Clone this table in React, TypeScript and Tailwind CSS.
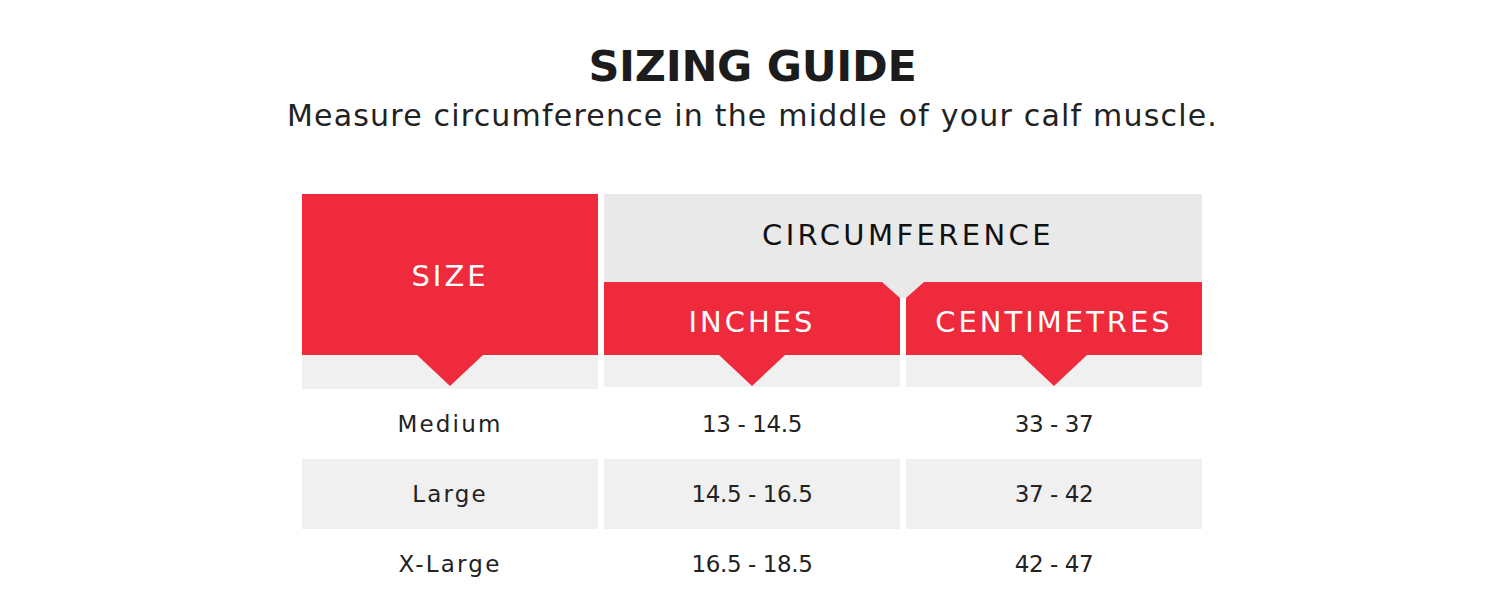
const RED = 'bg-[#ee2a3c]';

function Arrow() {
  return (
    <svg width="66" height="31" viewBox="0 0 66 31" className="block">
      <polygon points="0,0 66,0 33,31" fill="#ee2a3c" />
    </svg>
  );
}

const rows = [
  { size: 'Medium', inches: '13 - 14.5', cm: '33 - 37', shaded: false },
  { size: 'Large', inches: '14.5 - 16.5', cm: '37 - 42', shaded: true },
  { size: 'X-Large', inches: '16.5 - 18.5', cm: '42 - 47', shaded: false },
];

export default function App() {
  return (
    <div className="h-[602px] w-[1500px] bg-white font-['DejaVu_Sans',sans-serif] text-[#1a1a1a]">
      <div className="flex flex-col items-center pt-[42px] pl-[5px]">
        <h1 className="text-[43px] leading-[48px] font-bold tracking-[-0.3px] text-[#1c1c1c]">SIZING GUIDE</h1>
        <p className="mt-[11px] text-[30px] leading-[30px] tracking-[1.2px] text-[#222]">
          Measure circumference in the middle of your calf muscle.
        </p>
      </div>

      <div className="mt-[63px] ml-[302px] w-[900px]">
        {/* header */}
        <div className="flex gap-[6px]">
          <div className="flex w-[296px] flex-col">
            <div className={`flex h-[161px] items-center justify-center pt-[4px] ${RED} text-[29px] tracking-[3px] text-white`}>
              SIZE
            </div>
            <div className="flex h-[34px] justify-center bg-[#f0f0f0]">
              <Arrow />
            </div>
          </div>

          <div className="flex w-[598px] flex-col">
            <div className="flex h-[88px] items-center justify-center pb-[4px] pl-[10px] bg-[#e9e9e9] text-[29px] tracking-[3.4px] text-[#111]">
              CIRCUMFERENCE
            </div>
            <div className="flex gap-[6px] bg-[linear-gradient(to_bottom,#e9e9e9_16px,#ffffff_16px)]">
              <div className="flex w-[296px] flex-col">
                <div
                  className={`flex h-[73px] items-center justify-center pt-[9px] ${RED} text-[29px] tracking-[3px] text-white [clip-path:polygon(0_0,calc(100%_-_18px)_0,100%_16px,100%_100%,0_100%)]`}
                >
                  INCHES
                </div>
                <div className="flex h-[32px] justify-center bg-[#f0f0f0]">
                  <Arrow />
                </div>
              </div>
              <div className="flex w-[296px] flex-col">
                <div
                  className={`flex h-[73px] items-center justify-center pt-[9px] ${RED} text-[29px] tracking-[3px] text-white [clip-path:polygon(18px_0,100%_0,100%_100%,0_100%,0_16px)]`}
                >
                  CENTIMETRES
                </div>
                <div className="flex h-[32px] justify-center bg-[#f0f0f0]">
                  <Arrow />
                </div>
              </div>
            </div>
          </div>
        </div>

        {/* rows */}
        <div className="flex flex-col">
          {rows.map((r) => (
            <div key={r.size} className="flex h-[70px] gap-[6px] text-[23px] text-[#222]">
              <div className={`flex w-[296px] items-center justify-center tracking-[2.2px] ${r.shaded ? 'bg-[#f0f0f0]' : 'bg-white'}`}>
                {r.size}
              </div>
              <div className={`flex w-[296px] items-center justify-center tracking-[-0.4px] ${r.shaded ? 'bg-[#f0f0f0]' : 'bg-white'}`}>
                {r.inches}
              </div>
              <div className={`flex w-[296px] items-center justify-center tracking-[-0.4px] ${r.shaded ? 'bg-[#f0f0f0]' : 'bg-white'}`}>
                {r.cm}
              </div>
            </div>
          ))}
        </div>
      </div>
    </div>
  );
}
